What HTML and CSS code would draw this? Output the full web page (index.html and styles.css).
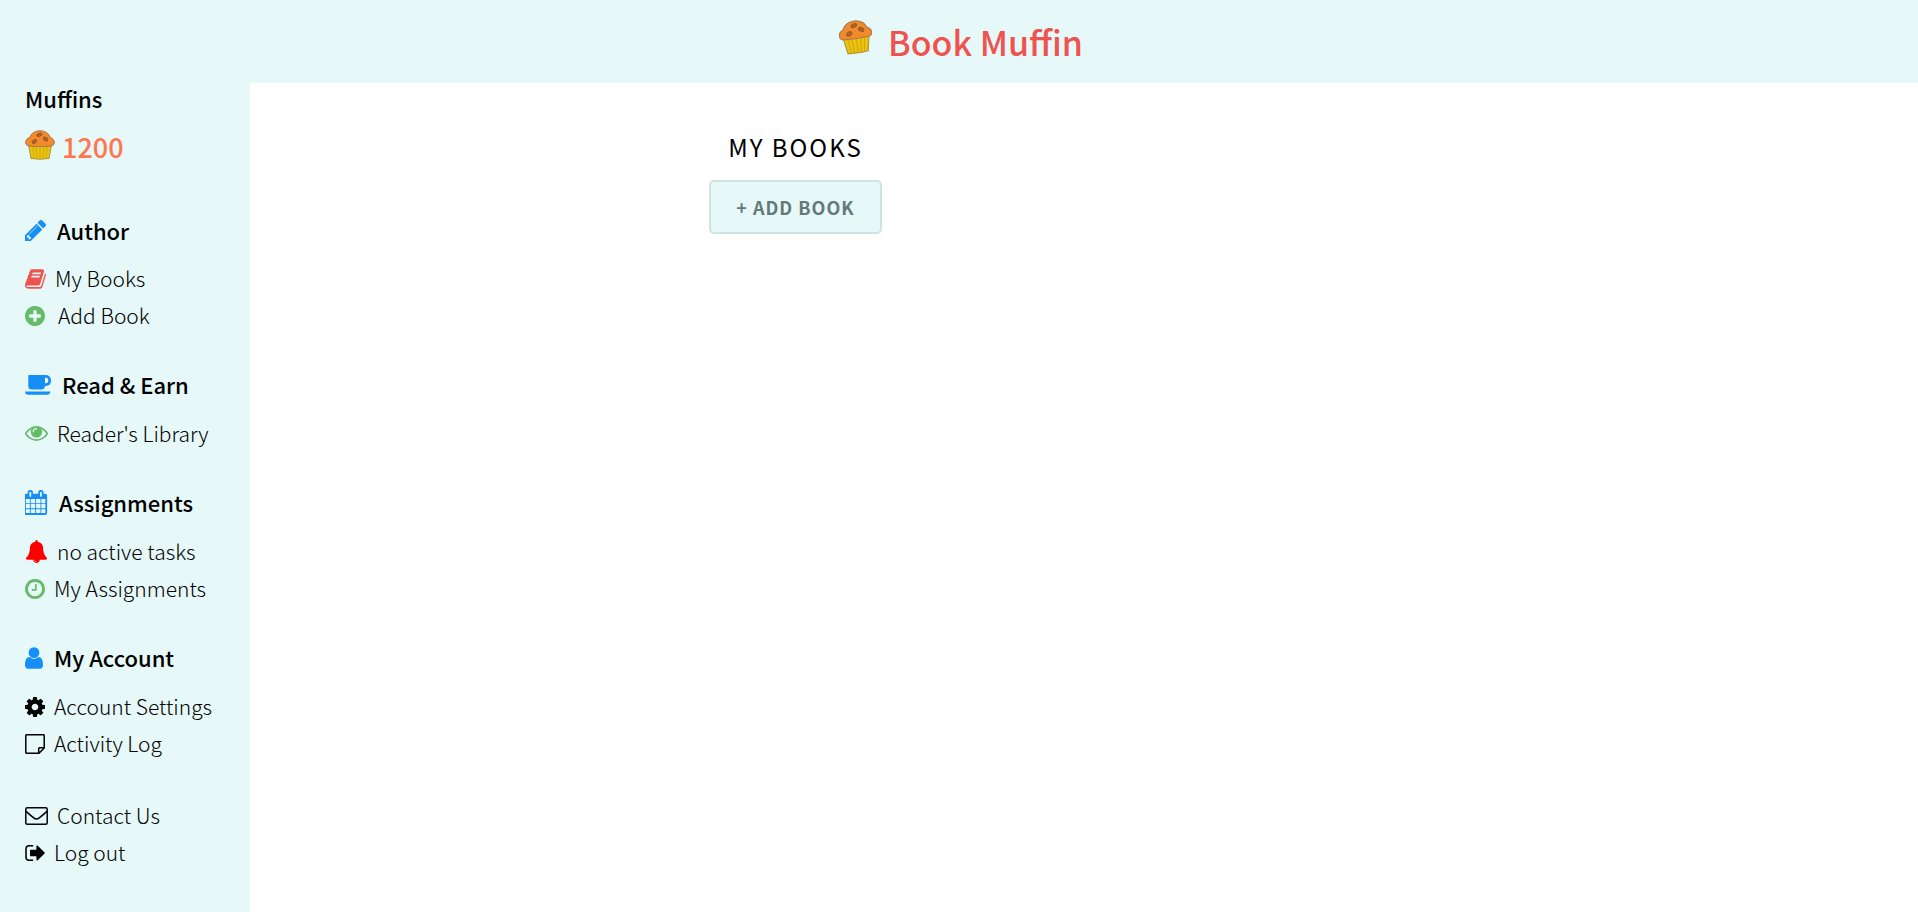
FILE: index.html
```
<!DOCTYPE html>
<html lang="en">
<head>
<meta charset="utf-8">
<meta name="viewport" content="width=device-width, initial-scale=1">
<title>Book Muffin</title>
<link rel="stylesheet" href="styles.css">
</head>
<body>
<svg width="0" height="0" class="defs" aria-hidden="true">
  <symbol id="muffin" viewBox="0 0 30 30">
    <path d="M3.600 14.500 L6 28.500 Q15 30 24 28.500 L26.600 14.500Z" fill="#edc211" stroke="#a8963c" stroke-width="1"/>
    <path d="M7.500 16l1.700 12M11 16l1 12.500M15 16v13M19 16l-1 12.500M22.500 16l-1.700 12" stroke="#cfa80c" stroke-width="1" fill="none"/>
    <path d="M3 16 Q0 14.500 .6 11.500 Q1.200 8.500 4.500 7.500 Q7 1 15 .7 Q23 1 25.500 7.500 Q29 9 29.400 12 Q29.500 15 26.500 16 Q15 17 3 16Z" fill="#f28a2c" stroke="#a87850" stroke-width="1"/>
    <g fill="#b5651d" stroke="#94592c" stroke-width="1">
      <ellipse cx="14.500" cy="4.800" rx="2.600" ry="1.400" transform="rotate(-20 14.500 4.800)"/>
      <ellipse cx="20.500" cy="9" rx="2.400" ry="1.500" transform="rotate(30 20.500 9)"/>
      <ellipse cx="9.500" cy="11.500" rx="2.400" ry="1.600" transform="rotate(-30 9.500 11.500)"/>
    </g>
  </symbol>
</svg>

<header class="topbar">
  <a class="brand" href="#">
    <svg class="brand-icon" aria-hidden="true"><use href="#muffin"/></svg>
    <span>Book Muffin</span>
  </a>
</header>

<div class="layout">
  <nav class="sidebar" aria-label="Main">
    <h2 class="balance-label">Muffins</h2>
    <p class="balance"><svg class="balance-icon" aria-hidden="true"><use href="#muffin"/></svg>1200</p>

    <section class="group">
      <h3 class="group-title"><svg class="blue" width="21" height="21" viewBox="128 149 1515 1515" aria-hidden="true"><path d="M491 1536l91-91-235-235-91 91v107h128v128h107zm523-928q0-22-22-22-10 0-17 7l-542 542q-7 7-7 17 0 22 22 22 10 0 17-7l542-542q7-7 7-17zm-54-192l416 416-832 832h-416v-416zm683 96q0 53-37 90l-166 166-416-416 166-165q36-38 90-38 53 0 91 38l235 234q37 39 37 91z"/></svg>Author</h3>
      <ul class="links">
        <li><a href="#"><svg class="red" width="21" height="20" viewBox="64 128 1664 1536" aria-hidden="true"><path d="M1703 478q40 57 18 129l-275 906q-19 64-76.500 107.500t-122.500 43.500h-923q-77 0-148.500-53.500t-99.500-131.500q-24-67-2-127 0-4 3-27t4-37q1-8-3-21.500t-3-19.500q2-11 8-21t16.500-23.500 16.500-23.500q23-38 45-91.500t30-91.500q3-10 .5-30t-.5-28q3-11 17-28t17-23q21-36 42-92t25-90q1-9-2.500-32t.5-28q4-13 22-30.500t22-22.500q19-26 42.500-84.500t27.500-96.500q1-8-3-25.500t-2-26.500q2-8 9-18t18-23 17-21q8-12 16.500-30.500t15-35 16-36 19.500-32 26.500-23.500 36-11.500 47.500 5.500l-1 3q38-9 51-9h761q74 0 114 56t18 130l-274 906q-36 119-71.500 153.500t-128.500 34.500h-869q-27 0-38 15-11 16-1 43 24 70 144 70h923q29 0 56-15.500t35-41.500l300-987q7-22 5-57 38 15 59 43zm-1064 2q-4 13 2 22.500t20 9.500h608q13 0 25.500-9.500t16.500-22.500l21-64q4-13-2-22.500t-20-9.500h-608q-13 0-25.500 9.500t-16.500 22.500zm-83 256q-4 13 2 22.500t20 9.500h608q13 0 25.500-9.500t16.500-22.500l21-64q4-13-2-22.500t-20-9.500h-608q-13 0-25.500 9.500t-16.500 22.500z"/></svg>My Books</a></li>
        <li><a class="spaced" href="#"><svg class="green" width="20" height="20" viewBox="128 128 1536 1536" aria-hidden="true"><path d="M1344 960v-128q0-26-19-45t-45-19h-256v-256q0-26-19-45t-45-19h-128q-26 0-45 19t-19 45v256h-256q-26 0-45 19t-19 45v128q0 26 19 45t45 19h256v256q0 26 19 45t45 19h128q26 0 45-19t19-45v-256h256q26 0 45-19t19-45zm320-64q0 209-103 385.500t-279.500 279.500-385.500 103-385.500-103-279.500-279.500-103-385.500 103-385.500 279.500-279.500 385.500-103 385.500 103 279.500 279.500 103 385.500z"/></svg>Add Book</a></li>
      </ul>
    </section>

    <section class="group">
      <h3 class="group-title"><svg class="blue" width="26" height="20" viewBox="0 0 26 20" aria-hidden="true"><path fill-rule="evenodd" d="M4 0H21Q26 .6 26 5.500Q26 10.500 21 11H20Q19.700 14.500 16 14.500H7Q3.300 14.500 3.300 11V.8Q3.300 0 4 0ZM20 2.700V8.300H21Q23.400 8 23.400 5.500Q23.400 3 21 2.700ZM0 16.500H25.300Q25 19.800 22 19.800H3.300Q.3 19.800 0 16.500Z"/></svg>Read &amp; Earn</h3>
      <ul class="links">
        <li><a href="#"><svg class="green" width="23" height="15" viewBox="0 384 1792 1152" aria-hidden="true"><path d="M1664 960q-152-236-381-353 61 104 61 225 0 185-131.500 316.500t-316.500 131.500-316.500-131.500-131.500-316.500q0-121 61-225-229 117-381 353 133 205 333.500 326.500t434.500 121.500 434.500-121.500 333.500-326.500zm-720-384q0-20-14-34t-34-14q-125 0-214.500 89.500t-89.500 214.500q0 20 14 34t34 14 34-14 14-34q0-86 61-147t147-61q20 0 34-14t14-34zm848 384q0 34-20 69-140 230-376.500 368.500t-499.500 138.500-499.500-139-376.500-368q-20-35-20-69t20-69q140-229 376.500-368t499.500-139 499.500 139 376.500 368q20 35 20 69z"/></svg>Reader's Library</a></li>
      </ul>
    </section>

    <section class="group">
      <h3 class="group-title"><svg class="blue" width="23" height="25" viewBox="128 0 1664 1792" aria-hidden="true"><path d="M192 1664h288v-288h-288v288zm352 0h320v-288h-320v288zm-352-352h288v-320h-288v320zm352 0h320v-320h-320v320zm-352-384h288v-288h-288v288zm736 736h320v-288h-320v288zm-384-736h320v-288h-320v288zm768 736h288v-288h-288v288zm-384-352h320v-320h-320v320zm-352-864v-288q0-13-9.500-22.500t-22.500-9.500h-64q-13 0-22.500 9.500t-9.500 22.500v288q0 13 9.500 22.500t22.500 9.500h64q13 0 22.500-9.500t9.500-22.500zm736 864h288v-320h-288v320zm-384-384h320v-288h-320v288zm384 0h288v-288h-288v288zm32-480v-288q0-13-9.500-22.500t-22.500-9.500h-64q-13 0-22.500 9.500t-9.500 22.500v288q0 13 9.500 22.500t22.500 9.500h64q13 0 22.500-9.500t9.500-22.500zm384-64v1280q0 52-38 90t-90 38h-1408q-52 0-90-38t-38-90v-1280q0-52 38-90t90-38h128v-96q0-66 47-113t113-47h64q66 0 113 47t47 113v96h384v-96q0-66 47-113t113-47h64q66 0 113 47t47 113v96h128q52 0 90 38t38 90z"/></svg>Assignments</h3>
      <ul class="links">
        <li><a href="#"><svg class="alert" width="23" height="23" viewBox="0 0 1792 1792" aria-hidden="true"><path d="M912 1696q0-16-16-16-59 0-101.500-42.500t-42.500-101.500q0-16-16-16t-16 16q0 73 51.500 124.500t124.500 51.500q16 0 16-16zm816-288q0 52-38 90t-90 38h-448q0 106-75 181t-181 75-181-75-75-181h-448q-52 0-90-38t-38-90q50-42 91-88t85-119.500 74.500-158.500 50-206 19.500-260q0-152 117-282.500t307-158.500q-8-19-8-39 0-40 28-68t68-28 68 28 28 68q0 20-8 39 190 28 307 158.500t117 282.500q0 139 19.500 260t50 206 74.500 158.500 85 119.500 91 88z"/></svg>no active tasks</a></li>
        <li><a href="#"><svg class="green" width="20" height="20" viewBox="128 128 1536 1536" aria-hidden="true"><path d="M1024 544v448q0 14-9 23t-23 9h-320q-14 0-23-9t-9-23v-64q0-14 9-23t23-9h224v-352q0-14 9-23t23-9h64q14 0 23 9t9 23zm416 352q0-148-73-273t-198-198-273-73-273 73-198 198-73 273 73 273 198 198 273 73 273-73 198-198 73-273zm224 0q0 209-103 385.500t-279.500 279.500-385.500 103-385.500-103-279.500-279.500-103-385.500 103-385.500 279.500-279.500 385.500-103 385.500 103 279.500 279.500 103 385.500z"/></svg>My Assignments</a></li>
      </ul>
    </section>

    <section class="group">
      <h3 class="group-title"><svg class="blue" width="18" height="22" viewBox="256 128 1280 1536" aria-hidden="true"><path d="M1536 1399q0 109-62.500 187t-150.500 78h-854q-88 0-150.500-78t-62.500-187q0-85 8.500-160.500t31.500-152 58.500-131 94-89 134.500-34.500q131 128 313 128t313-128q76 0 134.500 34.500t94 89 58.500 131 31.500 152 8.500 160.500zm-256-887q0 159-112.500 271.500t-271.500 112.500-271.500-112.500-112.500-271.500 112.500-271.500 271.500-112.500 271.500 112.500 112.500 271.500z"/></svg>My Account</h3>
      <ul class="links">
        <li><a href="#"><svg width="20" height="20" viewBox="128 128 1536 1536" aria-hidden="true"><path d="M1152 896q0-106-75-181t-181-75-181 75-75 181 75 181 181 75 181-75 75-181zm512-109v222q0 12-8 23t-20 13l-185 28q-19 54-39 91 35 50 107 138 10 12 10 25t-9 23q-27 37-99 108t-94 71q-12 0-26-9l-138-108q-44 23-91 38-16 136-29 186-7 28-36 28h-222q-14 0-24.500-8.500t-11.500-21.500l-28-184q-49-16-90-37l-141 107q-10 9-25 9-14 0-25-11-126-114-165-168-7-10-7-23 0-12 8-23 15-21 51-66.500t54-70.500q-27-50-41-99l-183-27q-13-2-21-12.500t-8-23.500v-222q0-12 8-23t19-13l186-28q14-46 39-92-40-57-107-138-10-12-10-24 0-10 9-23 26-36 98.500-107.500t94.500-71.500q13 0 26 10l138 107q44-23 91-38 16-136 29-186 7-28 36-28h222q14 0 24.500 8.500t11.500 21.500l28 184q49 16 90 37l142-107q9-9 24-9 13 0 25 10 129 119 165 170 7 8 7 22 0 12-8 23-15 21-51 66.500t-54 70.500q26 50 41 98l183 28q13 2 21 12.500t8 23.500z"/></svg>Account Settings</a></li>
        <li><a href="#"><svg class="line" width="20" height="20" viewBox="0 0 20 20" aria-hidden="true"><path d="M1.500 .8H18.500Q19.200 .8 19.200 1.500V14L14 19.200H1.500Q.8 19.200 .8 18.500V1.500Q.8 .8 1.500 .8ZM19.200 13.700H14.500Q13.700 13.700 13.700 14.500V19.200"/></svg>Activity Log</a></li>
      </ul>
    </section>

    <ul class="links footer-links">
      <li><a href="#"><svg class="line" width="23" height="18" viewBox="0 0 23 18" aria-hidden="true"><rect x=".8" y=".8" width="21.400" height="16.400" rx="1.500"/><path d="M1 4Q2 5.500 8.500 10.600Q11.500 13.500 14.500 10.600Q21 5.500 22 4"/></svg>Contact Us</a></li>
      <li><a href="#"><svg width="20" height="16" viewBox="64 256 1568 1280" aria-hidden="true"><path d="M704 1440q0 4 1 20t.5 26.500-3 23.500-10 19.500-20.500 6.500h-320q-119 0-203.500-84.500t-84.500-203.500v-704q0-119 84.500-203.500t203.500-84.500h320q13 0 22.500 9.500t9.500 22.500q0 4 1 20t.5 26.500-3 23.500-10 19.500-20.500 6.500h-320q-66 0-113 47t-47 113v704q0 66 47 113t113 47h312l11.500 1 11.500 3 8 5.500 7 9 2 13.500zm928-544q0 26-19 45l-544 544q-19 19-45 19t-45-19-19-45v-288h-448q-26 0-45-19t-19-45v-384q0-26 19-45t45-19h448v-288q0-26 19-45t45-19 45 19l544 544q19 19 19 45z"/></svg>Log out</a></li>
    </ul>
  </nav>

  <main class="content">
    <div class="books">
      <h1 class="books-title">MY BOOKS</h1>
      <button class="add-book" type="button">+ ADD BOOK</button>
    </div>
  </main>
</div>
</body>
</html>
```
FILE: styles.css
```
* {
  box-sizing: border-box;
}

body {
  margin: 0;
  min-height: 100vh;
  display: flex;
  flex-direction: column;
  background: #fff;
  color: #000;
  font-family: "Noto Sans CJK SC", "Noto Sans", sans-serif;
  font-size: 21px;
  font-weight: 300;
}

h1, h2, h3, p, ul {
  margin: 0;
  padding: 0;
}

a {
  color: inherit;
  text-decoration: none;
}

svg {
  flex: none;
  fill: currentColor;
}

.defs {
  position: absolute;
}

.topbar {
  display: flex;
  justify-content: center;
  height: 83px;
  background: #e6f8f8;
}

.brand {
  display: flex;
  align-items: center;
  gap: 15px;
  padding-left: 4px;
  color: #ef5350;
  font-size: 34px;
  font-weight: 500;
  line-height: 48px;
}

.brand-icon {
  width: 34px;
  height: 34px;
  margin-bottom: 10px;
  transform: rotate(-8deg);
}

.layout {
  flex: 1;
  display: flex;
}

.sidebar {
  flex: none;
  width: 250px;
  padding: 0 0 40px 25px;
  background: #e6f8f8;
}

.balance-label {
  font-size: 22px;
  font-weight: 500;
  line-height: 30px;
}

.balance {
  display: flex;
  align-items: center;
  gap: 7px;
  margin-top: 15px;
  color: #ff7550;
  font-size: 27px;
  font-weight: 500;
  line-height: 38px;
}

.balance-icon {
  width: 30px;
  height: 30px;
  margin-bottom: 4px;
}

.balance + .group {
  margin-top: 46px;
}

.group {
  margin-top: 32px;
}

.footer-links {
  margin-top: 35px;
}

.group-title {
  display: flex;
  align-items: center;
  gap: 11px;
  margin-bottom: 11px;
  font-size: 22px;
  font-weight: 500;
  line-height: 37px;
}

.group + .group .group-title {
  margin-bottom: 12px;
}

.links {
  list-style: none;
  line-height: 37px;
}

.links a {
  display: flex;
  align-items: center;
  gap: 9px;
}

.links .spaced {
  gap: 13px;
}

.blue {
  color: #158ef5;
}

.red {
  color: #ef5350;
}

.green {
  color: #66bb6a;
}

.alert {
  color: #f00;
}

.line {
  fill: none;
  stroke: currentColor;
  stroke-width: 1.5;
}

.content {
  flex: 1;
}

.books {
  display: flex;
  flex-direction: column;
  align-items: center;
  width: 65.4%;
  padding-top: 46px;
}

.books-title {
  font-size: 24px;
  font-weight: 400;
  letter-spacing: 2px;
  line-height: 36px;
}

.add-book {
  margin-top: 15px;
  padding: 12px 25px;
  border: 2px solid #cfe4e2;
  border-radius: 5px;
  background: #e6f8f8;
  color: #647a79;
  font-family: inherit;
  font-size: 18px;
  font-weight: 700;
  letter-spacing: 1px;
  line-height: 26px;
}
```
